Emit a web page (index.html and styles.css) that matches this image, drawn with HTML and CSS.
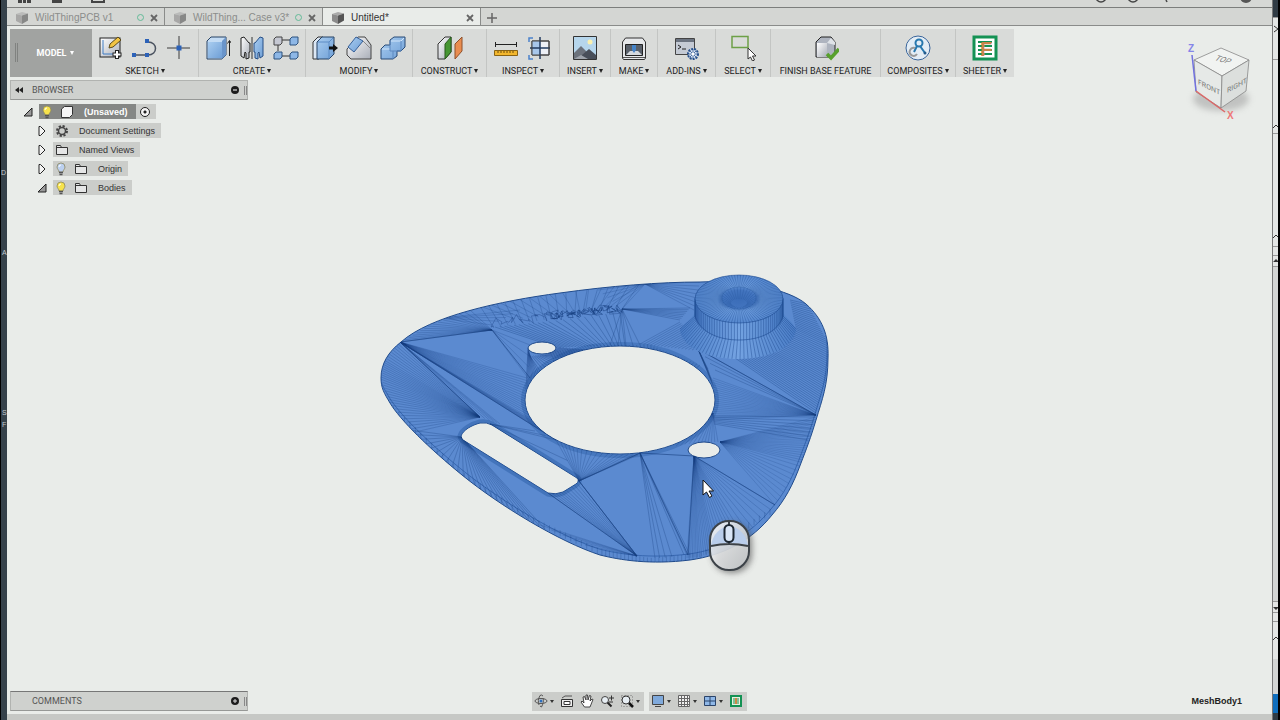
FILE: index.html
```
<!DOCTYPE html>
<html lang="en">
<head>
  <meta charset="UTF-8">
  <meta name="viewport" content="width=device-width, initial-scale=1.0">
  <title>Untitled*</title>
  <link rel="stylesheet" href="styles.css">
</head>
<body>
  <!-- shared icons -->
  <svg class="defs" width="0" height="0" aria-hidden="true">
    <linearGradient id="blueFace" x1="0" y1="0" x2="1" y2="1"><stop offset="0" stop-color="#a9cdf0"/><stop offset="1" stop-color="#6f9fd6"/></linearGradient>
    <linearGradient id="greyFace" x1="0" y1="0" x2="1" y2="1"><stop offset="0" stop-color="#fff"/><stop offset="1" stop-color="#a9aeb8"/></linearGradient>
    <symbol id="bulb" viewBox="0 0 12 14"><path d="M6 1a4 4 0 0 0-4 4c0 2 2 3 2 5h4c0-2 2-3 2-5a4 4 0 0 0-4-4z" fill="currentColor" stroke="#8a8660" stroke-width=".8"/><path d="M4 5a2 2 0 0 1 2-2" fill="none" stroke="#fff"/><path d="M4 10.500h4M4.500 12.500h3" stroke="#555" stroke-width="1.300"/></symbol>
    <symbol id="folder" viewBox="0 0 14 12"><path d="M1.500 10.500v-9h4l1 2h6v7z" fill="#e5e6e6" stroke="#333"/><path d="M2 3.500h5" stroke="#333"/></symbol>
    <symbol id="closed" viewBox="0 0 10 12"><path d="M2 1.500v9h1.500L8 6 3.500 1.500z" fill="#f4f5f4" stroke="#222"/></symbol>
    <symbol id="open" viewBox="0 0 10 10"><path d="M9 1v8H1z" fill="#999" stroke="#222"/></symbol>
    <symbol id="cube" viewBox="0 0 14 14"><path d="M1 3l6-2 6 1.500-6 2z" fill="#aaa"/><path d="M1 3l6 1.500V13l-6-3z" fill="#8b8b8b"/><path d="M7 4.500l6-2V9.500L7 13z" fill="#555"/></symbol>
    <symbol id="cross" viewBox="0 0 8 8"><path d="M1 1l6 6M7 1L1 7" stroke="#666" stroke-width="1.800"/></symbol>
  </svg>

  <div class="desk desk-left">
    <svg width="6" height="720"><g fill="#c4cbd0" font-size="7" font-family="Liberation Sans, sans-serif"><text x="0" y="175">D</text><text x="1" y="255">A</text><text x="1" y="415">S</text><text x="1" y="427">F</text></g></svg>
  </div>

  <div class="app">
    <header class="titlebar">
      <svg width="120" height="7"><path d="M11 0h4v3h-4zM16 0h3v3h-3zM20 0h4v3h-4zM45 0h10v3H45z" fill="#444"/><path d="M85 0v2h12V0" fill="none" stroke="#444" stroke-width="2"/></svg>
      <svg width="180" height="7"><g fill="none" stroke="#444" stroke-width="1.500"><circle cx="9" cy="-3" r="5"/><circle cx="41" cy="-3" r="5"/><path d="M74 0l1 2"/></g><circle cx="154" cy="-3" r="6" fill="#555"/></svg>
    </header>

    <nav class="tabs">
      <div class="tab">
        <svg class="cube" width="14" height="14"><use href="#cube"/></svg>
        <a href="#">WildThingPCB v1</a>
        <span class="dot"></span>
        <button class="close" aria-label="Close"><svg width="8" height="8"><use href="#cross"/></svg></button>
      </div>
      <div class="tab">
        <svg class="cube" width="14" height="14"><use href="#cube"/></svg>
        <a href="#">WildThing... Case v3*</a>
        <span class="dot"></span>
        <button class="close" aria-label="Close"><svg width="8" height="8"><use href="#cross"/></svg></button>
      </div>
      <div class="tab active">
        <svg class="cube" width="14" height="14"><use href="#cube"/></svg>
        <a href="#">Untitled*</a>
        <button class="close" aria-label="Close"><svg width="8" height="8"><use href="#cross"/></svg></button>
      </div>
      <button class="new-tab" aria-label="New tab"><svg width="10" height="10"><path d="M5 0v10M0 5h10" stroke="#666" stroke-width="1.500"/></svg></button>
    </nav>

    <main class="workspace">
      <svg class="scene" viewBox="7 26 1265 688">
        <defs>
          <clipPath id="plateClip"><path clip-rule="evenodd" id="plateClipPath"/></clipPath>
          <linearGradient id="wall" x1="0" x2="1" y1="0" y2="0"><stop offset="0" stop-color="#4a7dc6"/><stop offset=".5" stop-color="#74a3e2"/><stop offset="1" stop-color="#4a7dc6"/></linearGradient>
          <radialGradient id="ring" cx=".5" cy=".5" r=".5"><stop offset="0" stop-color="#3d6fba"/><stop offset=".36" stop-color="#4a7cc6"/><stop offset=".5" stop-color="#6f9fe0"/><stop offset="1" stop-color="#5587ce"/></radialGradient>
          <linearGradient id="mouseFill" x1="0" y1="0" x2="1" y2="1"><stop offset="0" stop-color="#fff" stop-opacity=".9"/><stop offset="1" stop-color="#cfd3d6" stop-opacity=".75"/></linearGradient>
          <filter id="soft" x="-50%" y="-50%" width="200%" height="200%"><feGaussianBlur stdDeviation="3"/></filter>
        </defs>
        <path id="plate" fill="#5b8ad0" fill-rule="evenodd" stroke="#204b8c"/>
        <g id="mesh" clip-path="url(#plateClip)" fill="none" stroke="#173f80"></g>
        <g id="boss" fill="none" stroke="#1d4a90"></g>

        <!-- view cube -->
        <ellipse cx="1221" cy="99" rx="28" ry="12" fill="#999" opacity=".5" filter="url(#soft)"/>
        <g stroke="#888" stroke-width=".8" stroke-linejoin="round">
          <path d="M1194 60l27-12 28 12-27 16z" fill="#f1f3f1"/>
          <path d="M1194 60l28 16-1 32-25-16z" fill="#e6e9e7"/>
          <path d="M1222 76l27-16-3 31-25 17z" fill="#dcdfdd"/>
        </g>
        <path d="M1192 55l4 36" stroke="#7070e0" stroke-width="1.500"/>
        <path d="M1196 91l29 21" stroke="#d66" stroke-width="1.500"/>
        <g font-family="Roboto, sans-serif" font-size="8" fill="#777">
          <text transform="translate(1214 60) rotate(15) skewX(-25)">TOP</text>
          <text transform="translate(1198 84) skewY(27)" font-size="7">FRONT</text>
          <text transform="translate(1227 93) skewY(-28)" font-size="7">RIGHT</text>
        </g>
        <g font-family="Liberation Sans, sans-serif" font-size="10" font-weight="bold"><text x="1188" y="52" fill="#8585e8">Z</text><text x="1227" y="119" fill="#ee7777">X</text></g>

        <!-- pointer and mouse button hint -->
        <path d="M703 480v15l3.500-3 3 5.500 2.500-1.500-3-5h4.500z" fill="#fff" stroke="#111"/>
        <rect x="712" y="523" width="40" height="50" rx="19" fill="#444" opacity=".6" filter="url(#soft)"/>
        <rect x="710" y="521" width="39" height="49" rx="19" fill="url(#mouseFill)"/>
        <path d="M711 545a19 24 0 0 1 37 0q-18-4-37 0z" fill="#b9cdeb"/>
        <rect x="710" y="521" width="39" height="49" rx="19" fill="none" stroke="#3c4248" stroke-width="2"/>
        <path d="M711 546q18-4 37 0M729 521v4M729 541v4" fill="none" stroke="#3c4248" stroke-width="2"/>
        <rect x="724.500" y="525" width="9" height="17" rx="4.500" fill="#d9e5f6" stroke="#1d2732" stroke-width="2"/>
      </svg>

      <div class="toolbar">
        <button class="mode"><span class="grip"></span>MODEL<i class="caret"></i></button>
        <section class="group">
          <div class="icons">
            <button aria-label="Create sketch"><svg viewBox="0 0 26 26"><rect x="2" y="3" width="20" height="19" fill="url(#greyFace)" stroke="#222"/><path d="M5 5v14h13" fill="none" stroke="#3f7cc4"/><path d="M11 13l1-4 8-7 3 3-8 7z" fill="#f2c443" stroke="#5b4a19"/><path d="M19 15v9M14.500 19.500h9" stroke="#222" stroke-width="4"/><path d="M19 16v7M15.500 19.500h7" stroke="#fff" stroke-width="2"/></svg></button>
            <button aria-label="Line"><svg viewBox="0 0 26 26"><path d="M2 20h14c10 0 10-13 0-13" fill="none" stroke="#4b5360" stroke-width="1.500"/><path d="M0 18h4v4H0zM13 18h4v4h-4zM13 4h4v4h-4z" fill="#2c62b8"/></svg></button>
            <button aria-label="Point"><svg viewBox="0 0 26 26"><path d="M13 1v23M1 13h23" stroke="#3c3c3c"/><path d="M10.500 10.500h5v5h-5z" fill="#2c62b8"/></svg></button>
          </div>
          <button class="name">SKETCH<i class="caret"></i></button>
        </section>
        <section class="group">
          <div class="icons">
            <button aria-label="Extrude"><svg viewBox="0 0 26 26"><path d="M2 6l4-4h15v18l-4 4H2z" fill="#c4dcf4" stroke="#274365"/><path d="M3 7h14v16H3z" fill="url(#blueFace)"/><path d="M17 6l4-4v18l-4 4z" fill="#6a95ca"/><path d="M24.500 21V6M22.500 8.500l2-3 2 3" fill="none" stroke="#222"/></svg></button>
            <button aria-label="Mirror"><svg viewBox="0 0 26 26"><path d="M2 3l3-1 5 6h1v9h-1v6l-3 1v-6l-1-1-1 6-3-2z" fill="url(#greyFace)" stroke="#222"/><path d="M24 3l-3-1-5 6h-1v9h1v6l3 1v-6l1-1 1 6 3-2z" fill="url(#blueFace)" stroke="#274f86"/><path d="M13 2v22" stroke="#333"/></svg></button>
            <button aria-label="Pattern"><svg viewBox="0 0 26 26"><path d="M9 5h8M5 9v7M9 21h8" stroke="#333"/><path d="M1 4l2-2h6v6L7 10H1z" fill="#c5c8d2" stroke="#444"/><g fill="#8db7e6" stroke="#2c527f"><path d="M17 4l2-2h6v6l-2 2h-6zM1 19l2-2h6v5l-2 2H1zM17 19l2-2h6v5l-2 2h-6z"/></g></svg></button>
          </div>
          <button class="name">CREATE<i class="caret"></i></button>
        </section>
        <section class="group">
          <div class="icons">
            <button aria-label="Press pull"><svg viewBox="0 0 26 26"><path d="M1 7l5-5h5v17l-4 5H1z" fill="#dbe7f4" stroke="#333"/><path d="M5 7l5-5h12v17l-5 5H5z" fill="url(#blueFace)" stroke="#274365"/><path d="M17 7v17M6 7h11l4-4" fill="none" stroke="#5d8cc5"/><path d="M17 13h5" stroke="#111" stroke-width="3"/><path d="M21 9l5 4-5 4z" fill="#111"/></svg></button>
            <button aria-label="Fillet"><svg viewBox="0 0 26 26"><path d="M1 14L12 2h7l6 8v14H5l-4-4z" fill="url(#greyFace)" stroke="#444"/><path d="M2 12L10 2l7 4-9 11z" fill="url(#blueFace)" stroke="#365f98"/><path d="M17 6l7 7" stroke="#888"/></svg></button>
            <button aria-label="Combine"><svg viewBox="0 0 26 26"><path d="M1 14l4-4h5V5l4-3h11v10l-4 4h-4v5l-4 3H1z" fill="url(#blueFace)" stroke="#294b77"/><path d="M2 14h8M11 6h10l3-3" fill="none" stroke="#d3e6fa"/><path d="M21 6v10M10 6v10h11M13 16v8" fill="none" stroke="#5c88bf"/></svg></button>
          </div>
          <button class="name">MODIFY<i class="caret"></i></button>
        </section>
        <section class="group">
          <div class="icons">
            <button aria-label="Offset plane"><svg viewBox="0 0 26 26"><path d="M1 9l7-7h6v15l-6 7H1z" fill="url(#greyFace)" stroke="#333"/><path d="M8 9l6-7v15l-6 7z" fill="#469634" stroke="#285a1d"/><path d="M18 9l7-7v14l-7 8z" fill="#e98d50" stroke="#90502a"/></svg></button>
          </div>
          <button class="name">CONSTRUCT<i class="caret"></i></button>
        </section>
        <section class="group">
          <div class="icons">
            <button aria-label="Measure"><svg viewBox="0 0 26 26"><path d="M2 9.500h22M2.500 7v5M23.500 7v5" stroke="#222"/><path d="M1.500 15.500h23v5h-23z" fill="#f3b72d" stroke="#8a6414"/><path d="M5 16v2M8 16v2M11 16v2M14 16v2M17 16v2M20 16v2" stroke="#6d4d0c"/></svg></button>
            <button aria-label="Section"><svg viewBox="0 0 26 26"><path d="M6 3H2v4M2 20v4h4" fill="none" stroke="#4b83cc" stroke-width="1.500"/><path d="M5 6h17v14H5z" fill="#edf0f6" stroke="#444"/><path d="M5 6h8v14H5z" fill="#a8c7eb"/><path d="M13 2v22M3 13h20" stroke="#223b60" stroke-width="1.500"/><path d="M5 6h17v14H5z" fill="none" stroke="#444"/></svg></button>
          </div>
          <button class="name">INSPECT<i class="caret"></i></button>
        </section>
        <section class="group">
          <div class="icons">
            <button aria-label="Insert image"><svg viewBox="0 0 26 26"><path d="M1.500 1.500h23v23h-23z" fill="#b6d6ec" stroke="#333"/><circle cx="18" cy="7" r="2.500" fill="#fbf1b0"/><path d="M2 18l7-7 8 8v5H2z" fill="#6c727c"/><path d="M10 20l7-6 7 6v4H10z" fill="#484e59"/><path d="M2 24l7-4 7 4z" fill="#9ea3ab"/></svg></button>
          </div>
          <button class="name">INSERT<i class="caret"></i></button>
        </section>
        <section class="group">
          <div class="icons">
            <button aria-label="3D print"><svg viewBox="0 0 26 26"><path d="M1.500 7l3-4h17l3 4v16l-1 1.500h-21l-1-1.500z" fill="#e6e8ea" stroke="#333"/><path d="M4.500 9.500h17v11h-17z" fill="#59606a" stroke="#222"/><path d="M5 20l4-4h8l4 4z" fill="#d5d9de"/><path d="M11 10h4v5l-2 3-2-3z" fill="#4584c9"/><path d="M2 22.500h22" stroke="#555"/></svg></button>
          </div>
          <button class="name">MAKE<i class="caret"></i></button>
        </section>
        <section class="group">
          <div class="icons">
            <button aria-label="Scripts and add-ins"><svg viewBox="0 0 26 26"><path d="M1.500 3.500h19v16h-19z" fill="#c4cad4" stroke="#444"/><path d="M2 4h18v3H2z" fill="#6b7380"/><path d="M4 10l3 2-3 2M8 14h4" fill="none" stroke="#222"/><circle cx="19" cy="19" r="5" fill="#dbe6f5" stroke="#28518c" stroke-width="2" stroke-dasharray="2 1"/><path d="M19 14v10M14 19h10M15.500 15.500l7 7M22.500 15.500l-7 7" stroke="#28518c" stroke-width=".8"/><circle cx="19" cy="19" r="1.500" fill="#fff"/></svg></button>
          </div>
          <button class="name">ADD-INS<i class="caret"></i></button>
        </section>
        <section class="group">
          <div class="icons">
            <button aria-label="Select"><svg viewBox="0 0 26 26"><path d="M2 1.500h16v11H2z" fill="none" stroke="#6da047" stroke-width="1.500"/><path d="M18 13v11l2.500-2 2 4 2-1-2-4H26z" fill="#fff" stroke="#333"/></svg></button>
          </div>
          <button class="name">SELECT<i class="caret"></i></button>
        </section>
        <section class="group">
          <div class="icons">
            <button aria-label="Finish base feature"><svg viewBox="0 0 26 26"><path d="M3 7l5-5h10l4 5v11l-5 4H3z" fill="#aeb4bf" stroke="#222"/><path d="M4 8h10v14H4z" fill="url(#greyFace)"/><path d="M14 8l4-5 4 4v3z" fill="#dfe3e8"/><path d="M14 19l4 4 8-9" fill="none" stroke="#57a02c" stroke-width="3.500"/></svg></button>
          </div>
          <button class="name">FINISH BASE FEATURE</button>
        </section>
        <section class="group">
          <div class="icons">
            <button aria-label="Composites"><svg viewBox="0 0 26 26"><circle cx="13" cy="13" r="12" fill="#e3edf5" stroke="#3a659b"/><circle cx="14" cy="8" r="3.500" fill="none" stroke="#2878ae" stroke-width="2"/><path d="M12 11l-3 6M15 11l5 7" stroke="#2878ae" stroke-width="2"/><path d="M10 13a4 4 0 1 0 2 6" fill="none" stroke="#999" stroke-width="2"/><circle cx="20" cy="18" r="1.500" fill="#245b8c"/></svg></button>
          </div>
          <button class="name">COMPOSITES<i class="caret"></i></button>
        </section>
        <section class="group">
          <div class="icons">
            <button aria-label="Sheeter"><svg viewBox="0 0 26 26"><path d="M2 2h22v22H2z" fill="#fff" stroke="#149254" stroke-width="3"/><path d="M6 7h14M6 11h14M6 15h14M6 19h14" stroke="#149254" stroke-width="2"/><text x="8" y="21" font-family="Liberation Sans, sans-serif" font-size="20" font-weight="bold" fill="#c7854a">F</text></svg></button>
          </div>
          <button class="name">SHEETER<i class="caret"></i></button>
        </section>
      </div>

      <div class="panel">
        <button class="collapse" aria-label="Collapse"><svg width="8" height="6"><path d="M4 0v6L0 3zM8 0v6L4 3z" fill="#222"/></svg></button>
        <span class="panel-title">BROWSER</span>
        <button class="round" aria-label="Hide"><svg width="8" height="8"><circle cx="4" cy="4" r="4" fill="#1c1c1c"/><path d="M2 4h4" stroke="#ddd" stroke-width="1.200"/></svg></button>
        <span class="edge"></span>
      </div>

      <ul class="tree">
        <li class="root">
          <svg width="10" height="10"><use href="#open"/></svg>
          <span class="chip selected"><svg class="on" width="12" height="14"><use href="#bulb"/></svg><svg width="14" height="14"><path d="M1.500 4l3-2.500h8v8l-3 3h-8z" fill="#f5f5f5" stroke="#333"/></svg><label for="activate">(Unsaved)</label></span>
          <span class="activate"><input type="radio" id="activate" checked></span>
        </li>
        <li>
          <svg width="10" height="12"><use href="#closed"/></svg>
          <span class="chip"><svg width="14" height="14"><circle cx="7" cy="7" r="5" fill="none" stroke="#444" stroke-width="2" stroke-dasharray="2.200 1.727"/><circle cx="7" cy="7" r="3.500" fill="none" stroke="#444" stroke-width="1.500"/></svg><span>Document Settings</span></span>
        </li>
        <li>
          <svg width="10" height="12"><use href="#closed"/></svg>
          <span class="chip"><svg width="14" height="12"><use href="#folder"/></svg><span>Named Views</span></span>
        </li>
        <li>
          <svg width="10" height="12"><use href="#closed"/></svg>
          <span class="chip"><svg class="off" width="12" height="14"><use href="#bulb"/></svg><svg width="14" height="12"><use href="#folder"/></svg><span>Origin</span></span>
        </li>
        <li>
          <svg width="10" height="10"><use href="#open"/></svg>
          <span class="chip"><svg class="on" width="12" height="14"><use href="#bulb"/></svg><svg width="14" height="12"><use href="#folder"/></svg><span>Bodies</span></span>
        </li>
      </ul>

      <footer class="bottom">
        <div class="panel comments">
          <span class="panel-title">COMMENTS</span>
          <button class="round" aria-label="Add comment"><svg width="8" height="8"><circle cx="4" cy="4" r="4" fill="#1c1c1c"/><path d="M2 4h4M4 2v4" stroke="#ddd"/></svg></button>
          <span class="edge"></span>
        </div>
        <div class="nav">
          <div class="nav-set">
            <button aria-label="Orbit"><svg width="14" height="14"><ellipse cx="7" cy="7" rx="6" ry="2.500" fill="none" stroke="#555"/><path d="M5 11c-1-3-1-6 1-9.500L7.500 1 9 2M9 4c1 3 0 6-1.500 9L6 12" fill="none" stroke="#555"/><circle cx="7" cy="7" r="1.500" fill="#2d6fbe"/></svg><i class="caret"></i></button>
            <button aria-label="Look at"><svg width="14" height="14"><path d="M1.500 5.500h11v7h-11z" fill="#eee" stroke="#333"/><path d="M4 7.500h6v3H4z" fill="#fff" stroke="#333"/><path d="M2 4l3-2h7" fill="none" stroke="#555"/></svg></button>
            <button aria-label="Pan"><svg width="14" height="14"><path d="M4.500 13L1 8l1-1 2 2-1-6 1.500-.5L6 6V1h1.500L8 6l1.500-4.500L11 2l-1 5 2-2 1 .5-3 7.500z" fill="#fff" stroke="#333" stroke-width=".9"/></svg></button>
            <button aria-label="Zoom"><svg width="14" height="14"><circle cx="5" cy="6" r="3.500" fill="#e7eef3" stroke="#444"/><path d="M7.500 8.500l4 4" stroke="#222" stroke-width="2"/><path d="M9 4h5M11.500 1.500v5M9 8h4" stroke="#333"/></svg></button>
            <button aria-label="Fit"><svg width="14" height="14"><path d="M1.500 1.500h11v11h-11z" fill="none" stroke="#777" stroke-dasharray="1 2"/><circle cx="6" cy="6" r="4" fill="#e7eef3" stroke="#333"/><path d="M9 9l4 4" stroke="#111" stroke-width="2.500"/></svg><i class="caret"></i></button>
          </div>
          <div class="nav-set">
            <button aria-label="Display settings"><svg width="14" height="14"><path d="M1.500 1.500h11v9h-11z" fill="#7fa9db" stroke="#444"/><path d="M4 12.500h6" stroke="#444"/></svg><i class="caret"></i></button>
            <button aria-label="Grid"><svg width="14" height="14"><path d="M1.500 1.500h11v11h-11z" fill="#f0f0f0"/><path d="M1.500 1.500h11v11h-11zM4.500 1v11M7.500 1v11M10.500 1v11M1 4.500h11M1 7.500h11M1 10.500h11" fill="none" stroke="#666"/></svg><i class="caret"></i></button>
            <button aria-label="Viewports"><svg width="14" height="14"><path d="M1.500 2.500h11v9h-11z" fill="#8fb8e8" stroke="#2b446a"/><path d="M7 3v8M2 7h10" stroke="#2b446a"/></svg><i class="caret"></i></button>
            <button aria-label="Sheet"><svg width="14" height="14"><path d="M2 2h10v10H2z" fill="#e9efe0" stroke="#149254" stroke-width="2"/><path d="M4 5h6M4 7h6M4 9h6" stroke="#149254"/><path d="M6 4h2v6H6z" fill="#cc8847"/></svg></button>
          </div>
        </div>
        <span class="selection">MeshBody1</span>
      </footer>
    </main>
    <div class="statusbar"></div>
  </div>

  <div class="desk desk-right">
    <svg width="8" height="720">
      <path d="M0 0h6v17H0z" fill="#303b44"/><path d="M0 266h6v335H0zM0 659h6v35H0z" fill="#d3d5d4"/><path d="M0 694h6v19H0z" fill="#0f6ebd"/><path d="M0 713h6v7H0z" fill="#303b44"/>
      <path d="M0 17.500h6M0 59.500h6M0 133.500h6M0 246.500h6M0 255.500h6M0 266.500h6M0 601.500h6M0 612.500h6M0 621.500h6" stroke="#999"/>
      <path d="M1 26l4 3-4 3M0 128l3-3 3 3M0 238l3-3 3 3M0 640l3-3 3 3" fill="none" stroke="#333"/>
      <path d="M0 607h6l-3 3zM0 262h6l-3-3z" fill="#333"/>
    </svg>
  </div>
  <script src="mesh.js"></script>
</body>
</html>
```
FILE: styles.css
```
* {
  box-sizing: border-box;
}
body {
  margin: 0;
  height: 100vh;
  display: flex;
  overflow: hidden;
  background: #e9ece9;
  color: #333;
  font-family: "Liberation Sans", Arial, sans-serif;
  font-size: 9px;
  line-height: 12px;
}
svg {
  display: block;
  flex: none;
}
.defs {
  position: absolute;
}
button {
  display: flex;
  align-items: center;
  justify-content: center;
  margin: 0;
  padding: 0;
  border: none;
  background: none;
  color: inherit;
  font: inherit;
  cursor: pointer;
}
.desk {
  flex: none;
  overflow: hidden;
}
.desk-left {
  width: 7px;
  background: #36424b;
  border-left: 1px solid #000;
}
.desk-right {
  width: 8px;
  background: #e4e6e5;
  border-left: 1px solid #777;
  border-right: 2px solid #000;
}
.app {
  flex: 1;
  min-width: 0;
  display: flex;
  flex-direction: column;
}

/* title bar and document tabs */
.titlebar {
  height: 8px;
  display: flex;
  justify-content: space-between;
  background: #d6d8d5;
  border-bottom: 1px solid #7c7e7c;
}
.tabs {
  height: 18px;
  display: flex;
  background: #d4d6d3;
  border-bottom: 1px solid #8a8c8a;
}
.tab {
  width: 158px;
  display: flex;
  align-items: center;
  gap: 6px;
  padding: 2px 6px 0 8px;
  border-right: 1px solid #8a8c8a;
  font-size: 10px;
}
.tab a {
  flex: 1;
  color: #8b8d8b;
  text-decoration: none;
  white-space: nowrap;
}
.tab .cube {
  opacity: 0.6;
}
.tab.active {
  background: #e9ece9;
}
.tab.active a {
  color: #333;
}
.tab.active .cube {
  opacity: 1;
}
.dot {
  flex: none;
  width: 7px;
  height: 7px;
  border: 1px solid #63bb98;
  border-radius: 50%;
}
.new-tab {
  padding: 2px 6px 0;
}

/* workspace */
.workspace {
  flex: 1;
  min-height: 0;
  position: relative;
  display: flex;
  flex-direction: column;
  align-items: flex-start;
  padding: 3px 0 3px 3px;
  background: #e9ece9;
}
.scene {
  position: absolute;
  inset: 0;
  width: 100%;
  height: 100%;
}
.toolbar,
.panel,
.tree,
.bottom {
  z-index: 1;
}
.toolbar {
  display: grid;
  grid-template-columns: 82px 106px 107px 107px 74px 73px 51px 47px 58px 55px 110px 75px 59px;
  height: 48px;
  background: #d9dbd9;
  font-family: Roboto, sans-serif;
}
.mode {
  position: relative;
  gap: 2px;
  padding-left: 9px;
  background: #a1a3a1;
  color: #fff;
  font-weight: bold;
}
.grip {
  position: absolute;
  left: 5px;
  top: 14px;
  width: 3px;
  height: 19px;
  border: solid #808280;
  border-width: 0 1px;
}
.caret {
  margin-left: 2px;
  border: solid transparent;
  border-width: 4px 2px 0;
  border-top-color: currentColor;
}
.group {
  display: flex;
  flex-direction: column;
  align-items: center;
  padding-top: 6px;
}
.group + .group {
  border-left: 1px solid #c3c5c3;
}
.icons {
  display: flex;
  gap: 8px;
}
.icons svg {
  width: 26px;
  height: 26px;
}
.name {
  margin-top: 4px;
  white-space: nowrap;
  color: #222;
}

/* side panels */
.panel {
  width: 238px;
  height: 20px;
  display: flex;
  align-items: center;
  margin-top: 3px;
  background: #cfd1ce;
  border: 1px solid #b1b3b0;
  border-bottom-color: #969896;
  color: #555;
  font-family: Roboto, sans-serif;
}
.collapse {
  width: 15px;
}
.panel-title {
  flex: 1;
  padding-left: 6px;
}
.comments .panel-title {
  padding-left: 21px;
}
.edge {
  width: 3px;
  height: 9px;
  margin-left: 5px;
  border: solid #888;
  border-width: 0 1px;
}
.tree {
  margin: 2px 0 0;
  padding: 0;
  list-style: none;
}
.tree li {
  height: 19px;
  display: flex;
  align-items: center;
  gap: 6px;
  padding-left: 27px;
}
.tree .root {
  gap: 0;
  padding-left: 13px;
}
.chip {
  height: 15px;
  display: flex;
  align-items: center;
  gap: 7px;
  padding: 0 6px 0 2px;
  background: #cbcdca;
}
.chip span {
  padding-left: 3px;
}
.selected {
  margin-left: 6px;
  padding-right: 8px;
  background: #858785;
  color: #fff;
  font-weight: bold;
}
.selected label {
  padding-left: 3px;
}
.on {
  color: #f7e34c;
}
.off {
  color: #bcd0ef;
}
.activate {
  height: 15px;
  display: flex;
  align-items: center;
  padding: 0 6px 0 4px;
  background: #cbcdca;
}
.activate input {
  appearance: none;
  width: 10px;
  height: 10px;
  margin: 0;
  border: 1px solid #222;
  border-radius: 50%;
  background: radial-gradient(#222 1px, #f4f4f4 2px);
}

/* bottom row */
.bottom {
  align-self: stretch;
  display: grid;
  grid-template-columns: 1fr auto 1fr;
  align-items: center;
  margin-top: auto;
}
.comments {
  margin-top: 0;
  border-top-color: #777;
}
.nav {
  display: flex;
  gap: 5px;
  margin-right: 3px;
}
.nav-set {
  height: 19px;
  display: flex;
  align-items: center;
  gap: 6px;
  padding: 0 4px 0 2px;
  background: #cbcdca;
}
.selection {
  justify-self: end;
  padding-right: 30px;
  color: #222;
  font-weight: bold;
}
.nav .caret {
  border-top-width: 3px;
}
.statusbar {
  height: 6px;
  background: #c6c8c5;
}
```
FILE: mesh.js
```
const SVG = "http://www.w3.org/2000/svg";
const mesh = document.getElementById("mesh");
const boss = document.getElementById("boss");

const outline = "M381 378C381 364 388 352 401 342C430 316 500 301 560 293C610 286 660 282 700 282C745 280 790 290 806 304C822 318 829 335 828 358C828 385 822 400 816 420C811 437 806 450 801 463C793 485 785 500 772 515C752 540 725 555 690 560C650 565 620 560 600 555C560 542 500 506 462 475C430 449 400 420 390 403C384 393 381 388 381 378Z";
const hole = (cx, cy, rx, ry) =>
  `M${cx - rx} ${cy}a${rx} ${ry} 0 1 0 ${2 * rx} 0a${rx} ${ry} 0 1 0 ${-2 * rx} 0Z`;
const slot = "M461 436C463 430 472 425 480 423Q487 422 492 425L577 478Q580 481 576 484L563 492Q556 495 548 493L463 440Q461 438 461 436Z";
const plate = outline + hole(620, 400, 95, 54) + hole(542, 348, 14, 6) + hole(704, 450, 16, 8) + slot;

document.getElementById("plate").setAttribute("d", plate);
document.getElementById("plateClipPath").setAttribute("d", plate);

function draw(parent, d, attrs) {
  const p = document.createElementNS(SVG, "path");
  p.setAttribute("d", d);
  for (const k in attrs) p.setAttribute(k, attrs[k]);
  parent.appendChild(p);
}

// n points spread along a polyline
function spread(pts, n) {
  const out = [];
  for (let i = 0; i < n; i++) {
    const t = (i / Math.max(1, n - 1)) * (pts.length - 1);
    const k = Math.min(Math.floor(t), pts.length - 2);
    const f = t - k;
    out.push([
      pts[k][0] + (pts[k + 1][0] - pts[k][0]) * f,
      pts[k][1] + (pts[k + 1][1] - pts[k][1]) * f
    ]);
  }
  return out;
}

function fan(apex, pts, n, opacity) {
  const d = spread(pts, n).map(p => `M${apex}L${p}`).join("");
  draw(mesh, d, { "stroke-width": 0.5, opacity: opacity || 0.45 });
}

function strip(a, b, n, opacity) {
  const pa = spread(a, n);
  const pb = spread(b, n);
  const d = pa.map((p, i) => `M${p}L${pb[i]}`).join("");
  draw(mesh, d, { "stroke-width": 0.6, opacity: opacity || 0.45 });
}

// walls of the plate and of its openings
draw(mesh, outline, { transform: "translate(-1 -6)", stroke: "#2a5aa4", "stroke-width": 1, opacity: 0.7 });
draw(mesh, hole(620, 400, 97, 56), { stroke: "#3465ae", "stroke-width": 4, opacity: 0.5 });
draw(mesh, slot, { stroke: "#3465ae", "stroke-width": 7, opacity: 0.6 });

// left side
fan([400, 342], [[527, 378], [525, 398], [532, 420], [556, 440]], 24);
fan([400, 342], [[480, 417], [492, 421], [500, 424]], 6);
fan([480, 417], [[400, 342], [385, 360], [381, 378], [390, 403], [415, 432]], 36, 0.5);
fan([462, 437], [[410, 430], [440, 458], [475, 486], [510, 509], [545, 529]], 25, 0.6);
fan([492, 330], [[401, 342], [430, 325], [470, 310]], 16, 0.5);
fan([492, 330], [[530, 345], [528, 378]], 4);
fan([440, 318], [[492, 325], [520, 310]], 5);
fan([579, 481], [[556, 440], [580, 449], [610, 454], [638, 455]], 18, 0.5);
fan([490, 424], [[535, 431], [556, 440], [579, 481]], 5, 0.6);
fan([637, 556], [[548, 493], [565, 491], [579, 481]], 12, 0.5);
fan([637, 556], [[540, 525], [585, 545]], 5);
strip([[528, 348], [530, 356], [545, 355], [558, 348]], [[526, 390], [540, 371], [565, 357], [590, 350]], 28, 0.6);

// band above the large opening
strip([[480, 306], [550, 295], [640, 283]], [[494, 328], [555, 318], [622, 309]], 18);
strip([[480, 306], [550, 295], [640, 283]], [[515, 319], [570, 314], [606, 310]], 15, 0.4);
strip([[495, 327], [545, 322], [620, 312]], [[558, 348], [590, 346], [625, 346]], 22, 0.55);
strip([[550, 352], [590, 345], [650, 345], [700, 365]], [[555, 362], [595, 349], [650, 349], [694, 370]], 50);
fan([622, 309], [[680, 320], [690, 308]], 8, 0.6);
fan([622, 309], [[640, 345], [626, 346], [610, 345]], 5, 0.6);
fan([645, 284], [[622, 309], [598, 290]], 6);
fan([645, 284], [[694, 310], [700, 282]], 8, 0.5);
strip([[640, 344], [692, 350]], [[680, 322], [700, 345]], 16);

// right side
fan([816, 415], [[700, 350], [715, 370]], 4, 0.6);
fan([816, 415], [[713, 378], [715, 400], [713, 420]], 20, 0.4);
fan([698, 349], [[708, 369], [714, 388]], 9, 0.5);
strip([[735, 358], [775, 352], [796, 330], [790, 300]], [[816, 413], [826, 380], [829, 345], [808, 304]], 50, 0.55);
fan([720, 442], [[816, 417], [809, 440], [801, 463], [775, 505]], 30, 0.4);
fan([713, 413], [[718, 442], [700, 442], [676, 446]], 12);
strip([[713, 416], [714, 424]], [[815, 417], [808, 440]], 7, 0.5);

// lower side
fan([640, 453], [[655, 558], [662, 558], [672, 557]], 4, 0.6);
fan([640, 453], [[684, 555], [690, 555]], 3, 0.6);
fan([694, 456], [[687, 558], [700, 557], [716, 550], [742, 537], [775, 505]], 30);
fan([579, 481], [[637, 556], [640, 453]], 2, 0.7);
strip([[388, 401], [460, 470], [530, 516], [600, 549], [650, 558], [700, 553], [770, 509]],
  [[388, 407], [460, 476], [530, 522], [600, 555], [650, 564], [700, 559], [770, 515]], 80);

// strong creases
draw(mesh, "M400 342L492 330L530 378M400 342L480 417M400 342L556 440M490 424L579 481L637 556L548 493M700 350L816 415M640 453L688 555L694 456L775 505M579 481L640 453L694 456", { "stroke-width": 0.8, opacity: 0.75 });

// engraved lettering breaks up into a tangle of small faces
let seed = 7;
function rnd() {
  seed = (seed * 16807) % 2147483647;
  return seed / 2147483647;
}
let d = "M494 326";
for (let i = 0; i < 50; i++) {
  const x = 495 + i * 2.5;
  d += `L${x + rnd() * 8 - 4} ${322 - (x - 495) * 0.11 + rnd() * 12 - 6}`;
}
draw(mesh, d, { "stroke-width": 0.6, opacity: 0.6 });
d = "";
for (let i = 0; i < 110; i++) {
  const x = 550 + i * 0.65;
  if (i % 28 > 22) continue;
  d += `${d ? "L" : "M"}${x + rnd() * 10 - 5} ${316 - (x - 550) * 0.11 + rnd() * 8 - 4}`;
}
draw(mesh, d, { "stroke-width": 0.9, opacity: 0.6 });

// raised boss: skirt, wall, top ring and bore
draw(boss, "M695 312C692 320 684 322 680 330C684 350 710 359 738 359C766 359 792 350 796 330C793 321 786 319 783 312Z", { fill: "url(#wall)", stroke: "none" });
draw(boss, "M695 298V316C700 332 718 340 739 340C760 340 778 332 783 316V298Z", { fill: "url(#wall)", "stroke-width": 0.6 });
draw(boss, hole(739, 299, 44, 24), { fill: "url(#ring)", "stroke-width": 0.6 });

let wall = "";
let skirt = "";
let ring = "";
for (let a = 0; a < 360; a += 4) {
  const c = Math.cos(a * Math.PI / 180);
  const s = Math.sin(a * Math.PI / 180);
  ring += `M${739 + 44 * c} ${299 + 24 * s}L${739 + 17 * c} ${298 + 11 * s}`;
  if (a % 12 === 0) ring += `L${739 + 8 * c} ${303 + 4 * s}`;
  if (s >= 0) {
    wall += `M${739 + 44 * c} ${299 + 24 * s}v17`;
    skirt += `M${739 + 44 * c} ${316 + 24 * s}L${738 + 58 * c} ${329 + 30 * s}`;
  }
}
draw(boss, skirt, { "stroke-width": 0.8, opacity: 0.55 });
draw(boss, wall, { "stroke-width": 0.8, opacity: 0.55 });
draw(boss, ring, { "stroke-width": 0.7, opacity: 0.5 });
draw(boss, hole(739, 298, 17, 11), { fill: "#3668b4", "fill-opacity": 0.4, "stroke-width": 0.5, "stroke-opacity": 0.5 });
```
